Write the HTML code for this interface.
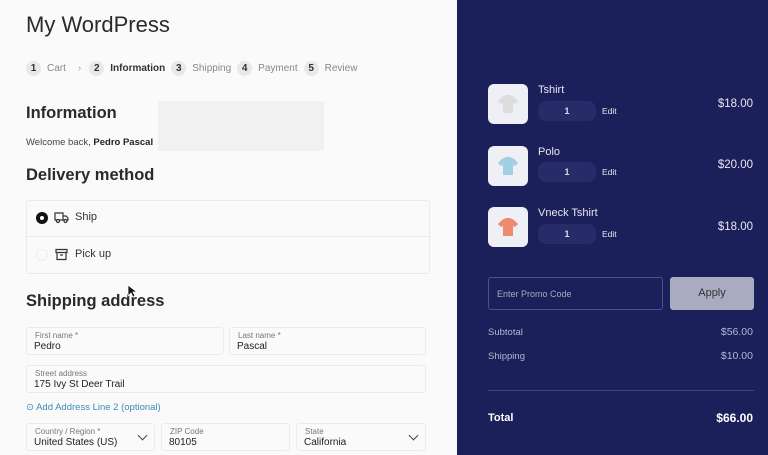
<!DOCTYPE html>
<html><head><meta charset="utf-8"><style>
*{margin:0;padding:0;box-sizing:border-box}
body{width:768px;height:455px;overflow:hidden;font-family:"Liberation Sans",sans-serif;background:#fafafa;position:relative;color:#222}
.l{position:absolute;left:0;top:0;width:457px;height:455px;background:#fafafa}
.r{position:absolute;left:457px;top:0;width:311px;height:455px;background:#1b1f5a}
.a{position:absolute;white-space:nowrap}
h1{position:absolute;left:26px;top:12px;font-weight:400;font-size:22px;color:#2a2a2a}
.st{position:absolute;top:61px;left:26px;font-size:10px;color:#888;display:flex;align-items:center}
.st .n{display:inline-block;width:15px;height:15px;border-radius:50%;background:#e8e8ea;color:#333;font-weight:700;text-align:center;line-height:15px;margin-right:6px}
.st span.t{margin-right:6px}
h2{position:absolute;left:26px;font-size:16.5px;font-weight:700;color:#2a2a2a}
.box{position:absolute;border:1px solid #ebebeb;border-radius:3px;background:#fafafa}
.lb{position:absolute;left:8px;top:3px;font-size:8px;color:#777}
.v{position:absolute;left:7px;top:13px;font-size:10px;color:#222}
.chev{position:absolute;right:8px;top:8px;width:7px;height:7px;border-right:1.3px solid #444;border-bottom:1.3px solid #444;transform:rotate(45deg)}
.img{position:absolute;left:488px;width:40px;height:40px;border-radius:6px;background:#eef0f6}
.q{position:absolute;left:538px;width:58px;height:20px;border-radius:8px;background:#272c68;color:#ddd;font-size:9px;font-weight:700;text-align:center;line-height:20px}
.w{color:#e8e8f0}
</style></head><body>
<div class="l"></div>
<div class="r"></div>
<h1>My WordPress</h1>
<div class="st"><span class="n">1</span><span class="t">Cart</span><span class="t" style="color:#aaa;margin:0 8px 0 6px">›</span><span class="n">2</span><span class="t" style="color:#333;font-weight:700">Information</span><span class="n">3</span><span class="t">Shipping</span><span class="n">4</span><span class="t">Payment</span><span class="n">5</span><span class="t">Review</span></div>
<h2 style="top:104px">Information</h2>
<div class="a" style="left:158px;top:101px;width:166px;height:50px;background:#f1f1f1"></div>
<div class="a" style="left:26px;top:137px;font-size:9.5px;color:#444">Welcome back, <b style="color:#222">Pedro Pascal</b></div>
<h2 style="top:166px">Delivery method</h2>
<div class="box" style="left:26px;top:200px;width:404px;height:74px"></div>
<div class="a" style="left:27px;top:236px;width:402px;height:1px;background:#ececec"></div>
<div class="a" style="left:36px;top:212px;width:12px;height:12px;border-radius:50%;background:#111"><div style="position:absolute;left:4px;top:4px;width:4px;height:4px;border-radius:50%;background:#fff"></div></div>
<svg class="a" style="left:54px;top:211px" width="15" height="13" viewBox="0 0 15 13" fill="none" stroke="#333" stroke-width="1.2"><path d="M1 2h8v7H1zM9 5h3l2 2v2H9"/><circle cx="4" cy="10" r="1.5" fill="#fafafa"/><circle cx="11.5" cy="10" r="1.5" fill="#fafafa"/></svg>
<div class="a" style="left:75px;top:211px;font-size:11px;color:#333">Ship</div>
<div class="a" style="left:36px;top:249px;width:12px;height:12px;border-radius:50%;border:1px solid #eee"></div>
<svg class="a" style="left:55px;top:248px" width="13" height="13" viewBox="0 0 13 13" fill="none" stroke="#333" stroke-width="1.2"><path d="M1 1.5h11v3H1zM2 4.5v7h9v-7M5 7h3"/></svg>
<div class="a" style="left:75px;top:248px;font-size:11px;color:#333">Pick up</div>
<h2 style="top:292px">Shipping address</h2>
<svg class="a" style="left:127px;top:284px" width="10" height="14" viewBox="0 0 10 14"><path d="M1 1v11l3-3 2 4 2-1-2-4h4z" fill="#111" stroke="#fff" stroke-width=".8"/></svg>
<div class="box" style="left:26px;top:327px;width:198px;height:28px"><div class="lb">First name *</div><div class="v">Pedro</div></div>
<div class="box" style="left:229px;top:327px;width:197px;height:28px"><div class="lb">Last name *</div><div class="v">Pascal</div></div>
<div class="box" style="left:26px;top:365px;width:400px;height:28px"><div class="lb">Street address</div><div class="v">175 Ivy St Deer Trail</div></div>
<div class="a" style="left:26px;top:402px;font-size:9.5px;color:#3a8ab8">⊙ Add Address Line 2 (optional)</div>
<div class="box" style="left:26px;top:423px;width:129px;height:28px"><div class="lb">Country / Region *</div><div class="v">United States (US)</div><div class="chev"></div></div>
<div class="box" style="left:161px;top:423px;width:129px;height:28px"><div class="lb">ZIP Code</div><div class="v">80105</div></div>
<div class="box" style="left:296px;top:423px;width:130px;height:28px"><div class="lb">State</div><div class="v">California</div><div class="chev"></div></div>

<div class="img" style="top:84px"><svg width="40" height="40" viewBox="0 0 40 40"><path d="M14 13l4-2h4l4 2 4 4-3 3-2-1v10H15V19l-2 1-3-3z" fill="#dcdcdc"/></svg></div>
<div class="img" style="top:146px"><svg width="40" height="40" viewBox="0 0 40 40"><path d="M14 13l4-2h4l4 2 4 4-3 3-2-1v10H15V19l-2 1-3-3z" fill="#9fcfe0"/></svg></div>
<div class="img" style="top:207px"><svg width="40" height="40" viewBox="0 0 40 40"><path d="M14 13l4-2h4l4 2 4 4-3 3-2-1v10H15V19l-2 1-3-3z" fill="#ee8a6e"/></svg></div>
<div class="a w" style="left:538px;top:84px;font-size:11px">Tshirt</div>
<div class="a w" style="left:538px;top:146px;font-size:11px">Polo</div>
<div class="a w" style="left:538px;top:207px;font-size:11px">Vneck Tshirt</div>
<div class="q" style="top:101px">1</div><div class="q" style="top:162px">1</div><div class="q" style="top:224px">1</div>
<div class="a w" style="left:602px;top:106px;font-size:8.5px">Edit</div>
<div class="a w" style="left:602px;top:167px;font-size:8.5px">Edit</div>
<div class="a w" style="left:602px;top:229px;font-size:8.5px">Edit</div>
<div class="a w" style="right:15px;top:98px;font-size:11.5px">$18.00</div>
<div class="a w" style="right:15px;top:159px;font-size:11.5px">$20.00</div>
<div class="a w" style="right:15px;top:221px;font-size:11.5px">$18.00</div>
<div class="a" style="left:488px;top:277px;width:175px;height:33px;border:1px solid #4a5090;border-radius:3px"></div>
<div class="a" style="left:497px;top:289px;font-size:9px;color:#aab">Enter Promo Code</div>
<div class="a" style="left:670px;top:277px;width:84px;height:33px;background:#a9abc0;border-radius:3px;text-align:center;line-height:33px;font-size:11px;color:#333">Apply</div>
<div class="a" style="left:488px;top:327px;font-size:9.5px;color:#b5b8d0">Subtotal</div>
<div class="a" style="right:15px;top:326px;font-size:10.5px;color:#b5b8d0">$56.00</div>
<div class="a" style="left:488px;top:351px;font-size:9.5px;color:#b5b8d0">Shipping</div>
<div class="a" style="right:15px;top:350px;font-size:10.5px;color:#b5b8d0">$10.00</div>
<div class="a" style="left:488px;top:390px;width:266px;height:1px;background:#3e4480"></div>
<div class="a" style="left:488px;top:412px;font-size:11px;font-weight:700;color:#fff">Total</div>
<div class="a" style="right:15px;top:411px;font-size:12px;font-weight:700;color:#fff">$66.00</div>
</body></html>
